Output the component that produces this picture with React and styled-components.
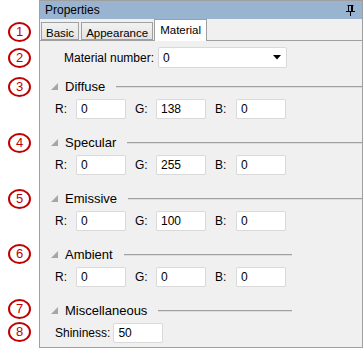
import React from "react";
import styled, { createGlobalStyle } from "styled-components";

const GlobalStyle = createGlobalStyle`
	html, body {
		margin: 0;
		padding: 0;
		background: #ffffff;
	}
	body {
		font-family: "Liberation Sans", Arial, sans-serif;
		font-size: 12px;
		color: #000000;
	}
`;

// callout markers, placed by the row they point at
const markers = [
	{ n: 1, y: 32 },
	{ n: 2, y: 58 },
	{ n: 3, y: 87 },
	{ n: 4, y: 143 },
	{ n: 5, y: 199 },
	{ n: 6, y: 254 },
	{ n: 7, y: 309 },
	{ n: 8, y: 332 },
];

const sections = [
	{ title: "Diffuse", values: ["0", "138", "0"] },
	{ title: "Specular", values: ["0", "255", "0"] },
	{ title: "Emissive", values: ["0", "100", "0"] },
	{ title: "Ambient", values: ["0", "0", "0"], short: true },
];

const PinIcon = () => (
	<svg width="9" height="11" viewBox="0 0 9 11">
		<path d="M1.5 0.5h6" stroke="#000" strokeWidth="1" />
		<path d="M2.5 1v5M6.5 1v5" stroke="#000" strokeWidth="1" />
		<rect x="5" y="1" width="1" height="5" fill="#000" />
		<path d="M0 6.5h9" stroke="#000" strokeWidth="1" />
		<path d="M4.5 7v4" stroke="#000" strokeWidth="1" />
	</svg>
);

const Caret = () => (
	<svg width="8" height="5" viewBox="0 0 8 5">
		<path d="M0 0h8L4 4.5z" fill="#000" />
	</svg>
);

const Corner = () => (
	<svg width="7" height="7" viewBox="0 0 7 7">
		<path d="M7 0v7H0z" fill="#a6a6a6" />
	</svg>
);

const App = () => {
	return (
		<>
			<GlobalStyle />
			<Page>
				<Gutter>
					{markers.map((m) => (
						<Marker key={m.n} style={{ top: m.y - 10 }}>
							{m.n}
						</Marker>
					))}
				</Gutter>
				<Panel>
					<Header>
						<span>Properties</span>
						<PinIcon />
					</Header>
					<TabStrip>
						<Tab>Basic</Tab>
						<Tab>Appearance</Tab>
						<Tab active>Material</Tab>
					</TabStrip>
					<Content>
						<MaterialRow>
							<span>Material number:</span>
							<DropBox>
								<span>0</span>
								<Caret />
							</DropBox>
						</MaterialRow>

						{sections.map((s, i) => (
							<Section key={s.title} first={i === 0}>
								<SectionHeader>
									<Corner />
									<SectionTitle>{s.title}</SectionTitle>
									<Rule short={s.short} />
								</SectionHeader>
								<FieldRow>
									<FieldLabel>R:</FieldLabel>
									<Field readOnly value={s.values[0]} />
									<FieldLabel>G:</FieldLabel>
									<Field readOnly value={s.values[1]} />
									<FieldLabel>B:</FieldLabel>
									<Field readOnly value={s.values[2]} />
								</FieldRow>
							</Section>
						))}

						<Section>
							<SectionHeader>
								<Corner />
								<SectionTitle>Miscellaneous</SectionTitle>
								<Rule short />
							</SectionHeader>
							<FieldRow>
								<ShineLabel>Shininess:</ShineLabel>
								<Field readOnly value="50" />
							</FieldRow>
						</Section>
					</Content>
				</Panel>
			</Page>
		</>
	);
};

const Page = styled.div`
	display: flex;
	width: 363px;
	height: 348px;
`;

const Gutter = styled.div`
	position: relative;
	width: 39px;
	flex-shrink: 0;
`;

const Marker = styled.div`
	position: absolute;
	left: 8px;
	width: 19px;
	height: 16px;
	border: 2px solid #c00000;
	border-radius: 50%;
	background: #ffffff;
	color: #c00000;
	font-size: 13px;
	line-height: 16px;
	text-align: center;
`;

const Panel = styled.div`
	box-sizing: border-box;
	width: 324px;
	height: 348px;
	display: flex;
	flex-direction: column;
	border: 1px solid #a0a0a0;
	background: #f0f0f0;
`;

const Header = styled.div`
	height: 18px;
	display: flex;
	align-items: center;
	justify-content: space-between;
	padding: 0 7px 0 5px;
	background: #99b4d1;
	font-size: 12px;
`;

const TabStrip = styled.div`
	height: 21px;
	display: flex;
	align-items: flex-end;
	gap: 2px;
	padding-left: 1px;
	border-bottom: 1px solid #a0a0a0;
`;

const Tab = styled.div`
	box-sizing: border-box;
	height: ${(p) => (p.active ? "22px" : "18px")};
	margin-bottom: ${(p) => (p.active ? "-1px" : "0")};
	margin-left: ${(p) => (p.active ? "-1px" : "0")};
	padding: ${(p) => (p.active ? "3px 5px 0" : "3px 4px 0")};
	border: 1px solid #a0a0a0;
	border-bottom: ${(p) => (p.active ? "none" : "1px solid #a0a0a0")};
	background: ${(p) =>
		p.active ? "#ffffff" : "linear-gradient(#f2f2f2, #e3e3e3)"};
	font-size: 11.5px;
	line-height: 14px;
`;

const Content = styled.div`
	flex: 1;
	padding-top: 6px;
`;

const MaterialRow = styled.div`
	display: flex;
	align-items: center;
	gap: 4px;
	padding-left: 24px;
`;

const DropBox = styled.div`
	box-sizing: border-box;
	width: 129px;
	height: 21px;
	display: flex;
	align-items: center;
	justify-content: space-between;
	padding: 0 5px 0 4px;
	background: #ffffff;
	border: 1px solid #d9d9d9;
	border-radius: 2px;
`;

const Section = styled.div`
	margin-top: ${(p) => (p.first ? "7px" : "12px")};
`;

const SectionHeader = styled.div`
	height: 22px;
	display: flex;
	align-items: center;
	padding-left: 11px;
`;

const SectionTitle = styled.span`
	margin-left: 7px;
	font-size: 13px;
`;

const Rule = styled.div`
	flex: 1;
	height: 0;
	margin: 1px ${(p) => (p.short ? "70px" : "0")} 0 11px;
	border-top: 1px solid #a0a0a0;
	border-bottom: 1px solid #dcdcdc;
`;

const FieldRow = styled.div`
	display: flex;
	align-items: center;
	margin-top: 2px;
	padding-left: 15px;
`;

const FieldLabel = styled.span`
	width: 21px;
	margin-left: 9px;

	&:first-child {
		margin-left: 0;
	}
`;

const ShineLabel = styled.span`
	margin-right: 3px;
`;

const Field = styled.input`
	box-sizing: border-box;
	width: 50px;
	height: 20px;
	margin: 0;
	padding: 0 4px;
	border: 1px solid #d9d9d9;
	border-radius: 2px;
	background: #ffffff;
	font-family: "Liberation Sans", Arial, sans-serif;
	font-size: 12px;
	color: #000000;
	outline: none;
`;

export default App;
